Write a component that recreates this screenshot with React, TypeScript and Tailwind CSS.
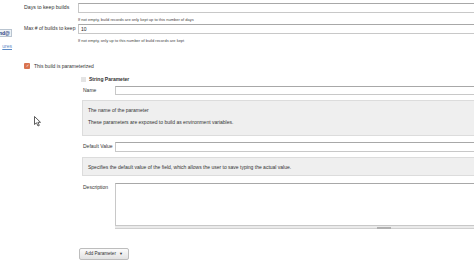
import React from "react";

const font = { fontFamily: '"Liberation Sans", Arial, sans-serif' };

function Input({ value, h = "h-[10px]" }: { value?: string; h?: string }) {
  return (
    <div className={`${h} w-[500px] border border-[#c8c8c8] border-t-[#a8a8a8] bg-white text-[5px] leading-[8px] pl-[2px] text-[#222]`}>
      {value}
    </div>
  );
}

export default function App() {
  return (
    <div className="w-[474px] h-[263px] overflow-hidden bg-white relative text-[#333]" style={font}>
      <div className="flex">
        {/* clipped sidebar */}
        <div className="w-[24px] shrink-0 relative">
          <div className="absolute right-[12px] top-[29px] flex flex-col items-end">
            <div className="border border-[#b9c4d0] bg-[#eef2f6] px-[1px] text-[5px] leading-[6px] text-[#2a3f7a] font-bold">end@</div>
            <div className="mt-[6px] text-[5px] leading-[6px] text-[#5a8ac6] underline">ures</div>
          </div>
        </div>
        {/* content */}
        <div className="flex-1 flex flex-col pt-[3px]">
          <div className="flex items-start">
            <div className="w-[54px] shrink-0 text-[5.2px] leading-[8px]">Days to keep builds</div>
            <Input />
          </div>
          <div className="ml-[54px] mt-[5px] text-[4px] leading-[4px] text-[#444]">
            If not empty, build records are only kept up to this number of days
          </div>
          <div className="flex items-start mt-[2px]">
            <div className="w-[54px] shrink-0 text-[5px] leading-[8px]">Max # of builds to keep</div>
            <Input value="10" />
          </div>
          <div className="ml-[54px] mt-[5px] text-[4px] leading-[4px] text-[#444]">
            If not empty, only up to this number of build records are kept
          </div>

          <div className="flex items-center mt-[20px] gap-[4px]">
            <div className="w-[6px] h-[6px] bg-[#d9734f] rounded-[1px] flex items-center justify-center text-white text-[4px] leading-[4px]">✓</div>
            <div className="text-[5px] leading-[6px]">This build is parameterized</div>
          </div>

          <div className="ml-[55px] mt-[7px] flex flex-col">
            <div className="flex items-center gap-[3px] ml-[2px]">
              <div className="w-[5px] h-[5px] bg-[#e4e4e4]" />
              <div className="text-[5px] leading-[6px] font-bold">String Parameter</div>
            </div>
            <div className="flex items-start mt-[4px] ml-[4px]">
              <div className="w-[32px] shrink-0 text-[5px] leading-[8px]">Name</div>
              <Input h="h-[9px]" />
            </div>
            <div className="mt-[5px] ml-[3px] h-[36px] w-[500px] bg-[#efefef] border border-[#dcdcdc] px-[5px] pt-[6px] text-[5px] leading-[6px]">
              <div>The name of the parameter</div>
              <div className="mt-[6px]">These parameters are exposed to build as environment variables.</div>
            </div>
            <div className="flex items-start mt-[6px] ml-[4px]">
              <div className="w-[32px] shrink-0 text-[5px] leading-[8px]">Default Value</div>
              <Input />
            </div>
            <div className="mt-[5px] ml-[3px] h-[19px] w-[500px] bg-[#efefef] border border-[#dcdcdc] px-[5px] flex items-center text-[5px] leading-[6px]">
              Specifies the default value of the field, which allows the user to save typing the actual value.
            </div>
            <div className="flex items-start mt-[7px] ml-[4px]">
              <div className="w-[32px] shrink-0 text-[5px] leading-[8px]">Description</div>
              <div className="flex flex-col">
                <div className="h-[43px] w-[500px] border border-[#c8c8c8] border-t-[#a8a8a8] bg-white" />
                <div className="h-[3px] w-[500px] bg-[#eaeaea] border-b border-[#d0d0d0] flex">
                  <div className="ml-[262px] w-[14px] h-[2px] mt-[0.5px] bg-[#b0b0b0]" />
                </div>
              </div>
            </div>
            <div className="mt-[19px] w-[50px] h-[12px] border border-[#bdbdbd] rounded-[2px] bg-gradient-to-b from-[#fbfbfb] to-[#e2e2e2] flex items-center justify-center gap-[3px] text-[4.6px] leading-[6px]">
              <span>Add Parameter</span>
              <span className="text-[4px]">▼</span>
            </div>
          </div>
        </div>
      </div>
      {/* mouse cursor */}
      <svg className="absolute left-[34px] top-[116px]" width="8" height="11" viewBox="0 0 8 11">
        <path d="M0.5 0.5 L0.5 8.5 L2.5 6.8 L4 10 L5.3 9.4 L3.9 6.3 L6.5 6.3 Z" fill="white" stroke="#333" strokeWidth="0.8" />
      </svg>
    </div>
  );
}
